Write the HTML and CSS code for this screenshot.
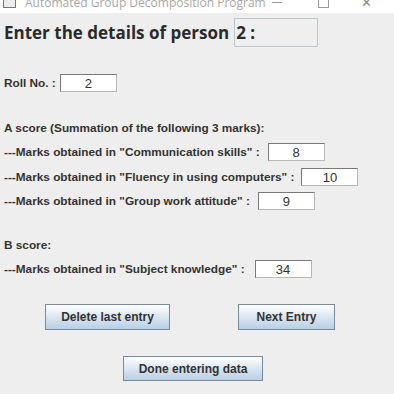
FILE: index.html
```html
<!DOCTYPE html>
<html>
<head>
<meta charset="utf-8">
<link rel="stylesheet" href="styles.css">
</head>
<body>
<div class="titlebar">
  <div class="tb-inner">
    <span class="tb-icon"></span>
    <span class="tb-title">Automated Group Decomposition Program</span>
    <span class="tb-btns"><span class="tb-min"></span><span class="tb-max"></span><span class="tb-close">✕</span></span>
  </div>
</div>
<div class="content">
  <div class="heading">Enter the details of person <span class="pbox">2 :</span></div>
  <div class="row roll"><span>Roll No. :</span><span class="field">2</span></div>
  <div class="row sec">A score (Summation of the following 3 marks):</div>
  <div class="row r1"><span>---Marks obtained in "Communication skills" :</span><span class="field">8</span></div>
  <div class="row r2"><span>---Marks obtained in "Fluency in using computers" :</span><span class="field">10</span></div>
  <div class="row r3"><span>---Marks obtained in "Group work attitude" :</span><span class="field">9</span></div>
  <div class="row sec2">B score:</div>
  <div class="row r4"><span>---Marks obtained in "Subject knowledge" :</span><span class="field">34</span></div>
  <div class="btnrow">
    <div class="btn b1">Delete last entry</div>
    <div class="btn b2">Next Entry</div>
  </div>
  <div class="btnrow2">
    <div class="btn b3">Done entering data</div>
  </div>
</div>
</body>
</html>
```
FILE: styles.css
```css
html, body { margin: 0; padding: 0; }
body {
  width: 394px; height: 394px; overflow: hidden;
  background: #eeeeee;
  font-family: "Liberation Sans", Arial, sans-serif;
  color: #333333;
}
.titlebar {
  height: 13px; background: #ffffff; overflow: hidden;
}
.tb-inner {
  display: flex; align-items: center; height: 20px; margin-top: -8px;
  font-family: "Open Sans", sans-serif; font-size: 12px; color: #a8a8a8;
}
.tb-icon {
  width: 11px; height: 10px; border: 1px solid #777; margin-left: 3px; margin-right: 9px;
  background: #eee;
}
.tb-title { flex: 1; }
.tb-btns { display: flex; align-items: center; gap: 0; }
.tb-min { width: 10px; height: 1px; background: #999; margin-right: 36px; }
.tb-max { width: 9px; height: 9px; border: 1px solid #999; margin-right: 32px; }
.tb-close { font-size: 13px; color: #888; margin-right: 22px; }
.content { display: flex; flex-direction: column; }
.heading {
  font-family: "Open Sans", sans-serif; font-weight: 700; font-size: 17px;
  color: #2b2b2b; display: flex; align-items: center; margin: 5px 0 0 4px; height: 29px;
}
.pbox {
  margin-left: 5px; width: 84px; height: 29px; border: 1px solid #b9c6d3;
  box-sizing: border-box; display: flex; align-items: center; padding-left: 1px;
  background: #efefef;
}
.row {
  display: flex; align-items: center; font-size: 11.8px; font-weight: 700;
  height: 18px; margin-left: 4px;
}
.field {
  margin-left: 7px; width: 57px; height: 18px; box-sizing: border-box;
  background: #ffffff; border: 1px solid #8f8f8f; border-color: #7a7a7a #b8b8b8 #b8b8b8 #7a7a7a;
  display: flex; align-items: center; justify-content: center; font-weight: 400;
  font-size: 13px; color: #333;
}
.roll { margin-top: 27px; }
.roll .field { margin-left: 4px; }
.sec { margin-top: 27px; }
.r1 { margin-top: 6px; }
.r1 .field { margin-left: 8px; }
.r2 { margin-top: 7px; }
.r3 { margin-top: 6px; }
.r3 .field { margin-left: 8px; }
.sec2 { margin-top: 26px; }
.r4 { margin-top: 6px; }
.r4 .field { margin-left: 10px; }
.btnrow { display: flex; margin-top: 26px; }
.btn {
  height: 26px; box-sizing: border-box; border: 1px solid #7a8a99;
  background: linear-gradient(#ffffff, #dde8f3 45%, #b8cfe5);
  font-size: 12px; font-weight: 700; display: flex; align-items: center; justify-content: center;
  color: #333;
}
.b1 { margin-left: 45px; width: 125px; }
.b2 { margin-left: 68px; width: 97px; }
.btnrow2 { display: flex; margin-top: 26px; }
.b3 { margin-left: 123px; width: 140px; height: 25px; }
```
